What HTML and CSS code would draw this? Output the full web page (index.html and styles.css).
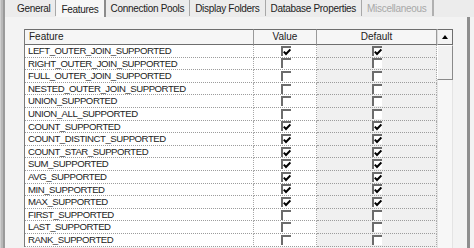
FILE: index.html
```html
<!DOCTYPE html>
<html lang="en">
<head>
    <meta charset="UTF-8">
    <title>Features</title>
    <link rel="stylesheet" href="styles.css">
</head>
<body>
<div class="window">
    <div class="edge-left"></div>
    <div class="main">
        <!-- Tab strip -->
        <div class="tabs">
            <div class="tab">General</div>
            <div class="tab active">Features</div>
            <div class="tab">Connection Pools</div>
            <div class="tab">Display Folders</div>
            <div class="tab">Database Properties</div>
            <div class="tab disabled">Miscellaneous</div>
        </div>

        <!-- Tab page -->
        <div class="page">
            <div class="grid" id="grid">
                <div class="hd">Feature</div>
                <div class="hd center">Value</div>
                <div class="hd center">Default</div>
            </div>
            <div class="vscroll">
                <div class="sb-btn"><span class="arrow-up"></span></div>
                <div class="sb-thumb"></div>
                <div class="sb-track"></div>
            </div>
            <div class="page-right"></div>
        </div>
    </div>
</div>

<script>
    const features = [
        ["LEFT_OUTER_JOIN_SUPPORTED", 1],
        ["RIGHT_OUTER_JOIN_SUPPORTED", 0],
        ["FULL_OUTER_JOIN_SUPPORTED", 0],
        ["NESTED_OUTER_JOIN_SUPPORTED", 0],
        ["UNION_SUPPORTED", 0],
        ["UNION_ALL_SUPPORTED", 0],
        ["COUNT_SUPPORTED", 1],
        ["COUNT_DISTINCT_SUPPORTED", 1],
        ["COUNT_STAR_SUPPORTED", 1],
        ["SUM_SUPPORTED", 1],
        ["AVG_SUPPORTED", 1],
        ["MIN_SUPPORTED", 1],
        ["MAX_SUPPORTED", 1],
        ["FIRST_SUPPORTED", 0],
        ["LAST_SUPPORTED", 0],
        ["RANK_SUPPORTED", 0]
    ];

    const tick = '<svg viewBox="0 0 8 8" width="8" height="8"><path d="M0.8 3.6 L3 6 L7.4 1.4" fill="none" stroke="#000" stroke-width="2"/></svg>';

    function checkbox(on) {
        return '<span class="cb">' + (on ? tick : '') + '</span>';
    }

    const grid = document.getElementById("grid");
    features.forEach(([name, on]) => {
        grid.insertAdjacentHTML("beforeend",
            '<div class="cell name">' + name + '</div>' +
            '<div class="cell val">' + checkbox(on) + '</div>' +
            '<div class="cell def">' + checkbox(on) + '</div>');
    });
</script>
</body>
</html>
```

FILE: styles.css
```css
body {
    margin: 0;
    font-family: "Liberation Sans", Arial, sans-serif;
    font-size: 10px;
    color: #222;
    background: #f2f2f2;
}
.window {
    display: flex;
    width: 474px;
    height: 248px;
    overflow: hidden;
}
.edge-left {
    width: 2px;
    border-left: 1px solid #cfcfcf;
    border-right: 2px solid #9a9a9a;
    background: #b8b8b8;
}
.main {
    flex: 1;
    display: flex;
    flex-direction: column;
}

/* tabs */
.tabs {
    display: flex;
    height: 17px;
    padding-left: 7px;
    background: #ececec;
    letter-spacing: -0.3px;
}
.tab {
    padding: 2px 5px 0 5px;
    border-right: 1px solid #a8a8a8;
    line-height: 13px;
    margin-bottom: 1px;
}
.tab.active {
    background: #f7f7f7;
    padding: 3px 5px 0 5px;
    border-right: 2px solid #8c8c8c;
    margin-bottom: 0;
}
.tab.disabled {
    color: #a8a8a8;
    border-right: 2px solid #b0b0b0;
}

/* page */
.page {
    flex: 1;
    display: flex;
    padding: 12px 0 0 19px;
    background: #f3f3f3;
}
.grid {
    display: grid;
    grid-template-columns: 229px 63px 120px;
    grid-template-rows: 16px;
    grid-auto-rows: 12.6px;
    border-left: 1px solid #7a7a7a;
    background: #fff;
    align-self: flex-start;
}
.hd {
    border-top: 1px solid #6e6e6e;
    border-bottom: 1px solid #6e6e6e;
    border-right: 1px solid #9a9a9a;
    padding-left: 4px;
    line-height: 14px;
    background: #f6f6f6;
}
.hd.center {
    text-align: center;
    padding-left: 0;
}
.cell {
    border-bottom: 1px dotted #9c9c9c;
    border-right: 1px dotted #a8a8a8;
    box-sizing: border-box;
    line-height: 12px;
    white-space: nowrap;
}
.name {
    padding-left: 3px;
    font-size: 9.6px;
    letter-spacing: -0.45px;
}
.val, .def {
    display: flex;
    justify-content: center;
    align-items: center;
}
.def {
    background: #f0f0f0;
}
.cb {
    display: flex;
    align-items: center;
    justify-content: center;
    width: 8px;
    height: 8px;
    border-top: 2px solid #6c6c6c;
    border-left: 2px solid #6c6c6c;
    background: #fff;
    margin-left: 1px;
}

/* scrollbar */
.vscroll {
    width: 16px;
    display: flex;
    flex-direction: column;
}
.sb-btn {
    height: 14px;
    border: 1px solid #6e6e6e;
    border-left-color: #dcdcdc;
    background: #f4f4f4;
    display: flex;
    align-items: center;
    justify-content: center;
}
.arrow-up {
    width: 0;
    height: 0;
    border-left: 3px solid transparent;
    border-right: 3px solid transparent;
    border-bottom: 4px solid #000;
}
.sb-thumb {
    height: 33px;
    border: 1px solid #8a8a8a;
    border-top-color: #fff;
    border-left-color: #fff;
    background: #f2f2f2;
}
.sb-track {
    flex: 1;
    background: #f7f7f7;
    border-left: 1px solid #e4e4e4;
    border-right: 1px solid #e4e4e4;
}
.page-right {
    width: 14px;
    border-right: 3px solid #8e8e8e;
    margin-top: -12px;
}
```
